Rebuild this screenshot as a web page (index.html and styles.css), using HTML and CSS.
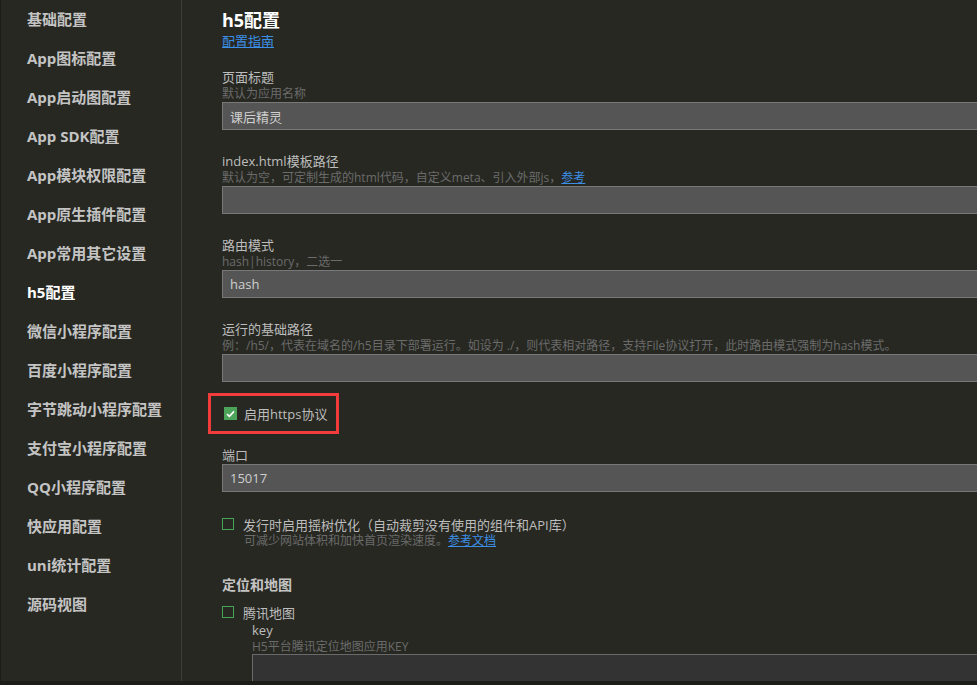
FILE: index.html
```html
<!DOCTYPE html>
<html lang="zh-CN">

<head>
    <meta charset="UTF-8">
    <meta name="viewport" content="width=device-width, initial-scale=1.0">
    <title>manifest.json</title>
    <link rel="stylesheet" href="styles.css">
</head>

<body>
    <div class="app">
        <ul class="side-nav">
            <li>基础配置</li>
            <li>App图标配置</li>
            <li>App启动图配置</li>
            <li>App SDK配置</li>
            <li>App模块权限配置</li>
            <li>App原生插件配置</li>
            <li>App常用其它设置</li>
            <li class="active">h5配置</li>
            <li>微信小程序配置</li>
            <li>百度小程序配置</li>
            <li>字节跳动小程序配置</li>
            <li>支付宝小程序配置</li>
            <li>QQ小程序配置</li>
            <li>快应用配置</li>
            <li>uni统计配置</li>
            <li>源码视图</li>
        </ul>

        <div class="main">
            <h2 class="title">h5配置</h2>
            <a class="link" href="#">配置指南</a>

            <div class="field first">
                <div class="label">页面标题</div>
                <div class="hint">默认为应用名称</div>
                <input type="text" class="text-input" value="课后精灵">
            </div>

            <div class="field">
                <div class="label">index.html模板路径</div>
                <div class="hint">默认为空，可定制生成的html代码，自定义meta、引入外部js，<a class="link" href="#">参考</a></div>
                <input type="text" class="text-input" value="">
            </div>

            <div class="field">
                <div class="label">路由模式</div>
                <div class="hint">hash|history，二选一</div>
                <input type="text" class="text-input" value="hash">
            </div>

            <div class="field">
                <div class="label">运行的基础路径</div>
                <div class="hint">例：/h5/，代表在域名的/h5目录下部署运行。如设为 ./，则代表相对路径，支持File协议打开，此时路由模式强制为hash模式。</div>
                <input type="text" class="text-input" value="">
            </div>

            <div class="mark">
                <label class="check">
                    <span class="box checked">
                        <svg width="9" height="8" viewBox="0 0 9 8"><path d="M1 4.2 L3.4 6.4 L8 1.4" fill="none" stroke="#fff" stroke-width="1.6"/></svg>
                    </span>
                    启用https协议
                </label>
            </div>

            <div class="field port">
                <div class="label">端口</div>
                <input type="text" class="text-input" value="15017">
            </div>

            <div class="option">
                <label class="check small"><span class="box"></span>发行时启用摇树优化（自动裁剪没有使用的组件和API库）</label>
                <div class="hint sub">可减少网站体积和加快首页渲染速度。<a class="link" href="#">参考文档</a></div>
            </div>

            <h4 class="section">定位和地图</h4>
            <label class="check small map"><span class="box"></span>腾讯地图</label>
            <div class="field nested">
                <div class="label">key</div>
                <div class="hint">H5平台腾讯定位地图应用KEY</div>
                <input type="text" class="text-input dark" value="">
            </div>
        </div>
    </div>
</body>

</html>
```

FILE: styles.css
```css
body {
    margin: 0;
    height: 685px;
    overflow: hidden;
    background-color: #272822;
    font-family: 'Open Sans', 'Noto Sans CJK SC', sans-serif;
    color: #bdbdbd;
}

.app {
    display: flex;
    height: 681px;
    border-left: 1px solid #1c1d19;
    border-bottom: 4px solid #1c1d19;
}

.side-nav {
    list-style: none;
    margin: 0;
    padding: 0;
    width: 180px;
    flex-shrink: 0;
    border-right: 1px solid #3b3c37;
}

.side-nav li {
    height: 39px;
    line-height: 39px;
    padding-left: 26px;
    font-size: 15px;
    font-weight: bold;
    color: #c4c4c4;
}

.side-nav li.active {
    color: #ffffff;
}

.main {
    flex: 1;
    overflow: hidden;
    padding: 8px 0 0 40px;
}

.title {
    margin: 0;
    font-size: 18px;
    line-height: 24px;
    color: #ffffff;
    font-weight: bold;
}

.link {
    color: #3b8fe6;
    text-decoration: underline;
    font-size: 12px;
}

.main > .link {
    display: block;
    font-size: 13px;
    line-height: 20px;
    margin-top: -1px;
}

.field {
    margin-top: 22px;
}

.field.first {
    margin-top: 17px;
}

.label {
    font-size: 13px;
    line-height: 18px;
    color: #bdbdbd;
}

.hint {
    font-size: 12px;
    line-height: 16px;
    color: #6b6b6b;
    white-space: nowrap;
}

.text-input {
    display: block;
    box-sizing: border-box;
    width: 790px;
    height: 28px;
    margin: 0;
    padding: 0 7px;
    background-color: #555555;
    border: 1px solid #787878;
    color: #cfcfcf;
    font-family: inherit;
    font-size: 13px;
    outline: none;
}

.text-input.dark {
    background-color: #333333;
    border-color: #6a6a6a;
    height: 30px;
}

.mark {
    display: inline-block;
    margin: 11px 0 0 -14px;
    padding: 6px 9px 6px 13px;
    border: 3px solid #f23b3b;
}

.check {
    display: flex;
    align-items: center;
    gap: 7px;
    height: 23px;
    font-size: 13px;
    color: #bdbdbd;
}

.check.small {
    height: 18px;
    gap: 9px;
}

.check.map {
    margin-bottom: 1px;
}

.box {
    box-sizing: border-box;
    width: 12px;
    height: 12px;
    border: 1px solid #44a457;
    display: flex;
    align-items: center;
    justify-content: center;
}

.box.checked {
    width: 13px;
    height: 13px;
    background-color: #4ca35a;
    border-color: #4ca35a;
}

.field.port {
    margin-top: 12px;
}

.option {
    margin-top: 23px;
}

.hint.sub {
    padding-left: 22px;
}

.section {
    margin: 26px 0 8px;
    font-size: 14px;
    line-height: 20px;
    color: #c4c4c4;
}

.field.nested {
    margin-top: 0;
    padding-left: 30px;
}

.field.nested .label {
    line-height: 17px;
}

.field.nested .hint {
    line-height: 15px;
}
```
